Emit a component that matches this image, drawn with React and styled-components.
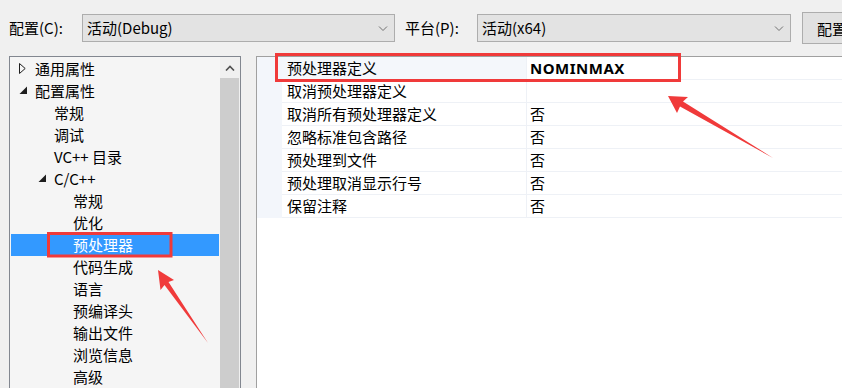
import React from "react";
import styled, { createGlobalStyle } from "styled-components";

const GlobalStyle = createGlobalStyle`
  html, body {
    margin: 0;
    padding: 0;
    background: #f0f0f0;
  }
`;

const treeItems = [
  { label: "通用属性", level: 0, toggle: "closed" },
  { label: "配置属性", level: 0, toggle: "open" },
  { label: "常规", level: 1 },
  { label: "调试", level: 1 },
  { label: "VC++ 目录", level: 1 },
  { label: "C/C++", level: 1, toggle: "open" },
  { label: "常规", level: 2 },
  { label: "优化", level: 2 },
  { label: "预处理器", level: 2, selected: true },
  { label: "代码生成", level: 2 },
  { label: "语言", level: 2 },
  { label: "预编译头", level: 2 },
  { label: "输出文件", level: 2 },
  { label: "浏览信息", level: 2 },
  { label: "高级", level: 2 },
];

const props = [
  { name: "预处理器定义", value: "NOMINMAX", strong: true, current: true },
  { name: "取消预处理器定义", value: "" },
  { name: "取消所有预处理器定义", value: "否" },
  { name: "忽略标准包含路径", value: "否" },
  { name: "预处理到文件", value: "否" },
  { name: "预处理取消显示行号", value: "否" },
  { name: "保留注释", value: "否" },
];

const Chevron = ({ up }) => (
  <svg width="10" height="6" viewBox="0 0 10 6">
    <polyline
      points={up ? "1,5.5 5,1.5 9,5.5" : "1,0.5 5,4.5 9,0.5"}
      fill="none"
      stroke={up ? "#505050" : "#707070"}
      strokeWidth={up ? 1.6 : 1}
    />
  </svg>
);

const Toggle = ({ state }) =>
  state === "open" ? (
    <svg width="9" height="9" viewBox="0 0 9 9">
      <polygon points="8,0.5 8,8 0.5,8" fill="#1e1e1e" />
    </svg>
  ) : (
    <svg width="7" height="11" viewBox="0 0 7 11">
      <polygon points="0.5,0.5 6.2,5.5 0.5,10.5" fill="none" stroke="#1e1e1e" strokeWidth="1" />
    </svg>
  );

const App = () => {
  return (
    <Window>
      <GlobalStyle />
      <TopBar>
        <FieldLabel>配置(C):</FieldLabel>
        <Combo width={313}>
          <span>活动(Debug)</span>
          <Chevron />
        </Combo>
        <FieldLabel gap={10} width={72}>平台(P):</FieldLabel>
        <Combo width={314}>
          <span>活动(x64)</span>
          <Chevron />
        </Combo>
        <Button>配置管理器...</Button>
      </TopBar>

      <Body>
        <TreePanel>
          <TreeList>
            {treeItems.map((item, i) => (
              <TreeRow key={i} level={item.level} selected={item.selected}>
                <ToggleSlot>{item.toggle && <Toggle state={item.toggle} />}</ToggleSlot>
                {item.label}
              </TreeRow>
            ))}
          </TreeList>
          <ScrollBar>
            <ScrollArrow>
              <Chevron up />
            </ScrollArrow>
            <ScrollThumb />
          </ScrollBar>
        </TreePanel>

        <PropPanel>
          {props.map((p, i) => (
            <PropRow key={i}>
              <Gutter />
              <PropName current={p.current}>{p.name}</PropName>
              <PropValue strong={p.strong}>{p.value}</PropValue>
            </PropRow>
          ))}
        </PropPanel>
      </Body>

      <Annotations width="842" height="388" viewBox="0 0 842 388">
        <rect x="276.5" y="54.5" width="403" height="26" fill="none" stroke="#f03a3a" strokeWidth="3" />
        <rect x="48.5" y="233.5" width="122.5" height="22.5" fill="none" stroke="#f03a3a" strokeWidth="3" />
        <polygon
          points="668,96 677,113 680,106.5 773,158 683,101.5 688,97"
          fill="#f03a3a"
        />
        <polygon
          points="158,270 160.5,290 164.5,285 208,343 168.5,282 174,280"
          fill="#f03a3a"
        />
      </Annotations>
    </Window>
  );
};

const Window = styled.div`
  position: relative;
  width: 842px;
  height: 388px;
  overflow: hidden;
  background: #f0f0f0;
  font-family: "Noto Sans CJK SC", "Noto Sans", sans-serif;
  font-size: 15px;
  color: #000;
`;

const TopBar = styled.div`
  display: flex;
  align-items: center;
  height: 56px;
  padding-left: 9px;
  box-sizing: border-box;
`;

const FieldLabel = styled.div`
  width: ${(p) => p.width || 73}px;
  margin-left: ${(p) => p.gap || 0}px;
  flex-shrink: 0;
  line-height: 20px;
`;

const Combo = styled.div`
  width: ${(p) => p.width}px;
  height: 28px;
  box-sizing: border-box;
  flex-shrink: 0;
  display: flex;
  align-items: center;
  justify-content: space-between;
  padding: 0 6px 0 4px;
  background: #e3e3e3;
  border: 1px solid #adadad;
  line-height: 20px;

  svg {
    margin-top: 1px;
  }
`;

const Button = styled.div`
  margin-left: 11px;
  height: 32px;
  flex-shrink: 0;
  box-sizing: border-box;
  display: flex;
  align-items: center;
  padding: 0 14px;
  background: #e1e1e1;
  border: 1px solid #adadad;
  white-space: nowrap;
`;

const Body = styled.div`
  display: flex;
  gap: 15px;
  padding-left: 9px;
  height: 332px;
`;

const TreePanel = styled.div`
  width: 232px;
  flex-shrink: 0;
  height: 360px;
  box-sizing: border-box;
  display: flex;
  border: 1px solid #828790;
  background: #f5f5f5;
`;

const TreeList = styled.div`
  width: 210px;
  padding: 1px 1px 0;
  box-sizing: border-box;
`;

const TreeRow = styled.div`
  display: flex;
  align-items: center;
  height: 22px;
  box-sizing: border-box;
  padding-left: ${(p) => 8 + p.level * 19}px;
  padding-bottom: 2px;
  background: ${(p) => (p.selected ? "#3399ff" : "transparent")};
  color: ${(p) => (p.selected ? "#fff" : "#000")};
  white-space: nowrap;
`;

const ToggleSlot = styled.span`
  display: inline-flex;
  align-items: center;
  width: 16px;
  height: 20px;
`;

const ScrollBar = styled.div`
  width: 20px;
  display: flex;
  flex-direction: column;
  background: #f0f0f0;
`;

const ScrollArrow = styled.div`
  height: 21px;
  display: flex;
  align-items: center;
  justify-content: center;
`;

const ScrollThumb = styled.div`
  flex: 1;
  width: 19px;
  background: #cdcdcd;
`;

const PropPanel = styled.div`
  width: 620px;
  flex-shrink: 0;
  height: 360px;
  box-sizing: border-box;
  border-top: 1px solid #a0a0a0;
  border-left: 1px solid #a0a0a0;
  background: #fff;
`;

const PropRow = styled.div`
  display: grid;
  grid-template-columns: 25px 245px 1fr;
  height: 23px;
  box-sizing: border-box;
  border-bottom: 1px solid #eef1f6;
`;

const Gutter = styled.div`
  background: #f3f6fb;
  margin-bottom: -1px;
`;

const PropName = styled.div`
  display: flex;
  align-items: center;
  padding-left: 5px;
  padding-bottom: 1px;
  border-right: 1px solid #eef1f6;
  background: ${(p) => (p.current ? "#f4f7fb" : "#fff")};
  white-space: nowrap;
`;

const PropValue = styled.div`
  display: flex;
  align-items: center;
  padding-left: 3px;
  padding-bottom: 1px;
  font-weight: ${(p) => (p.strong ? 700 : 400)};
  letter-spacing: ${(p) => (p.strong ? "0.5px" : "normal")};
  font-family: ${(p) =>
    p.strong ? '"Noto Sans", "Noto Sans CJK SC", sans-serif' : "inherit"};
  white-space: nowrap;
`;

const Annotations = styled.svg`
  position: absolute;
  left: 0;
  top: 0;
  pointer-events: none;
`;

export default App;
